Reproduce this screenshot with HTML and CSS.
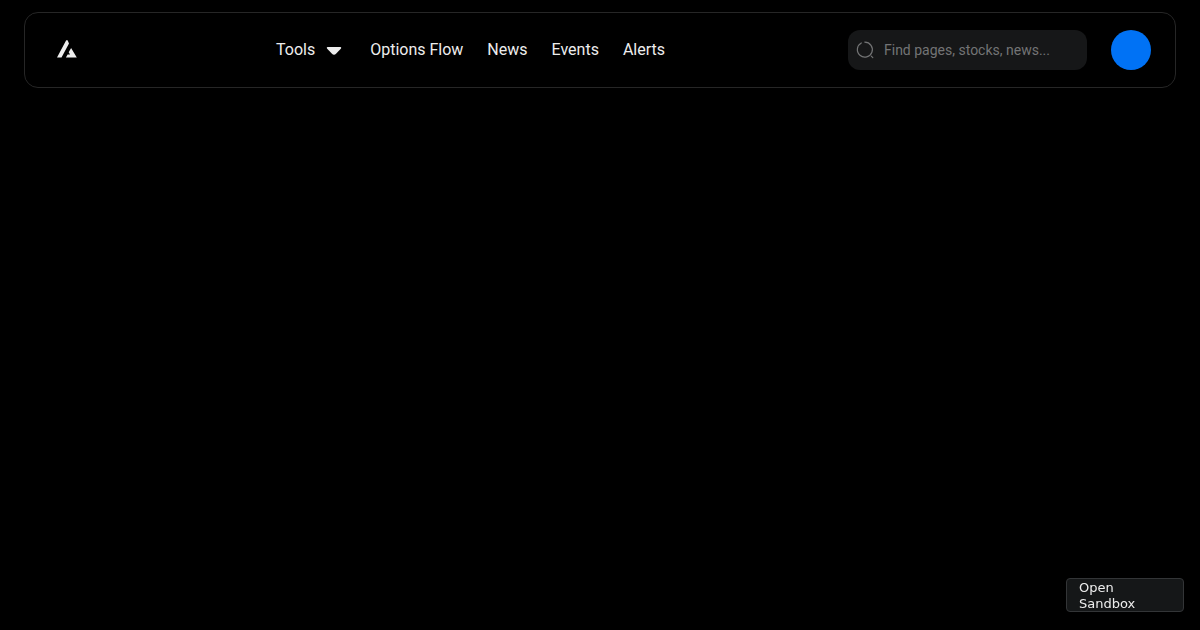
FILE: index.html
```html
<!DOCTYPE html>
<html lang="en">
<head>
<meta charset="utf-8">
<meta name="viewport" content="width=device-width, initial-scale=1">
<title>Home</title>
<link rel="stylesheet" href="styles.css">
</head>
<body>
<header class="topbar">
  <a class="logo" href="#" aria-label="Home">
    <svg width="20" height="20" viewBox="0 0 20 20" aria-hidden="true">
      <path fill="currentColor" d="M0 17.5 9.2.3H10.6L12 3.4 4.5 17.5ZM8.9 17.5 10.6 14.5H13.1L11.7 12.2 14.1 7.9 19.8 17.5Z"/>
    </svg>
  </a>
  <nav class="nav">
    <button class="nav-item nav-menu" type="button">Tools
      <svg width="24" height="24" viewBox="0 0 24 24" aria-hidden="true">
        <path fill="currentColor" d="M5.6 9H18.4C19.3 9 19.5 9.9 18.8 10.7L14 15.8C12.8 17 11.2 17 10 15.8L5.2 10.7C4.5 9.9 4.7 9 5.6 9Z"/>
      </svg>
    </button>
    <a class="nav-item" href="#">Options Flow</a>
    <a class="nav-item" href="#">News</a>
    <a class="nav-item" href="#">Events</a>
    <a class="nav-item" href="#">Alerts</a>
  </nav>
  <div class="actions">
    <label class="search">
      <svg width="18" height="18" viewBox="0 0 18 18" fill="none" stroke="currentColor" stroke-width="1.2" stroke-linecap="round" aria-hidden="true">
        <path d="M8.8 1.1A7.5 7.5 0 1 1 5.3 2"/>
        <path d="M15.3 15.1 16.8 16.6"/>
      </svg>
      <input class="search-input" type="search" aria-label="Search" placeholder="Find pages, stocks, news...">
    </label>
    <button class="avatar" type="button" aria-label="Account"></button>
  </div>
</header>
<a class="sandbox" href="#">Open Sandbox</a>
</body>
</html>
```
FILE: styles.css
```css
* {
  box-sizing: border-box;
}

body {
  margin: 0;
  padding: 12px 24px;
  min-height: 100vh;
  background: #000;
  color: #ededed;
  font-family: Roboto, sans-serif;
  font-size: 16px;
  line-height: 24px;
}

a,
button {
  color: inherit;
  font: inherit;
  text-decoration: none;
}

button {
  border: 0;
  padding: 0;
  background: none;
  cursor: pointer;
}

svg {
  display: block;
  flex: none;
}

.topbar {
  display: flex;
  align-items: center;
  justify-content: space-between;
  padding: 17px 24px;
  border: 1px solid #262626;
  border-radius: 14px;
}

.logo {
  padding: 0 16px 0 8px;
}

.nav,
.actions {
  display: flex;
  align-items: center;
  gap: 24px;
}

.nav-item {
  white-space: nowrap;
}

.nav-menu {
  display: flex;
  align-items: center;
  gap: 7px;
}

.search {
  display: flex;
  align-items: center;
  gap: 10px;
  width: 239px;
  height: 40px;
  padding: 0 8px;
  border-radius: 12px;
  background: #161718;
  color: #737475;
}

.search-input {
  flex: 1;
  min-width: 0;
  padding: 0;
  border: 0;
  outline: 0;
  background: none;
  color: #ededed;
  font: 14px/20px Roboto, sans-serif;
}

.search-input::placeholder {
  color: #737475;
  opacity: 1;
}

.avatar {
  width: 40px;
  height: 40px;
  border-radius: 50%;
  background: #0072f5;
}

.sandbox {
  position: fixed;
  right: 16px;
  bottom: 18px;
  width: 118px;
  height: 34px;
  padding: 1px 12px 0;
  border: 1px solid #333537;
  border-radius: 4px;
  background: #151718;
  font: 13px/16px "DejaVu Sans", sans-serif;
}
```
